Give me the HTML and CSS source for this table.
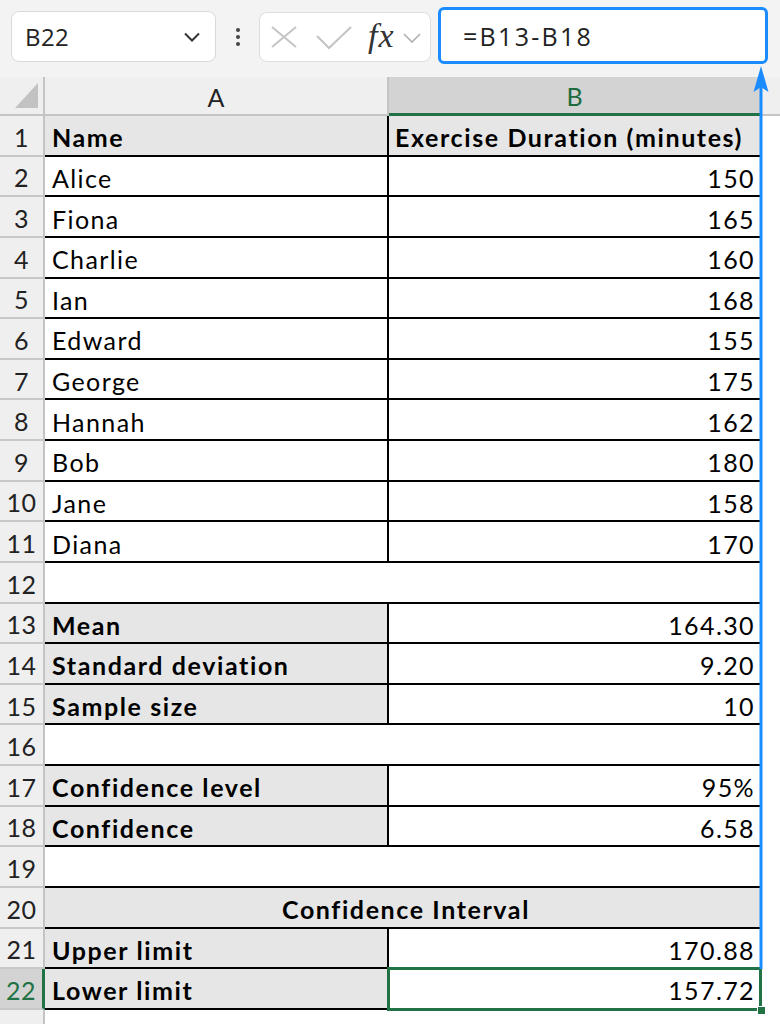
FILE: index.html
```html
<!DOCTYPE html>
<html>
<head>
<meta charset="utf-8">
<link rel="stylesheet" href="styles.css">
</head>
<body>
<div class="app">
  <div class="toolbar">
    <div class="namebox">
      <span class="namebox-text">B22</span>
      <svg class="chev" width="16" height="10" viewBox="0 0 16 10"><polyline points="1,1.5 8,8.5 15,1.5" fill="none" stroke="#333" stroke-width="2"/></svg>
    </div>
    <div class="kebab"><span></span><span></span><span></span></div>
    <div class="fxgroup">
      <svg class="ico-x" width="26" height="22" viewBox="0 0 26 22"><path d="M1 1 L25 21 M25 1 L1 21" stroke="#c4c4c4" stroke-width="2" fill="none"/></svg>
      <svg class="ico-check" width="36" height="24" viewBox="0 0 36 24"><polyline points="1,10 13,22 35,1" fill="none" stroke="#c4c4c4" stroke-width="2"/></svg>
      <span class="fx">fx</span>
      <svg class="ico-chev" width="18" height="10" viewBox="0 0 18 10"><polyline points="1,1 9,9 17,1" fill="none" stroke="#b0b0b0" stroke-width="1.6"/></svg>
    </div>
    <div class="formula"><span class="formula-text">=B13-B18</span></div>
  </div>

  <div class="sheet">
    <div class="corner"><span class="corner-tri"></span></div>
    <div class="colhead">A</div>
    <div class="colhead sel">B</div>
    <div class="colhead blank"></div>

    <div class="rh">1</div><div class="c a g bold">Name</div><div class="c b g bold left">Exercise Duration (minutes)</div><div class="c x"></div>
    <div class="rh">2</div><div class="c a">Alice</div><div class="c b">150</div><div class="c x"></div>
    <div class="rh">3</div><div class="c a">Fiona</div><div class="c b">165</div><div class="c x"></div>
    <div class="rh">4</div><div class="c a">Charlie</div><div class="c b">160</div><div class="c x"></div>
    <div class="rh">5</div><div class="c a">Ian</div><div class="c b">168</div><div class="c x"></div>
    <div class="rh">6</div><div class="c a">Edward</div><div class="c b">155</div><div class="c x"></div>
    <div class="rh">7</div><div class="c a">George</div><div class="c b">175</div><div class="c x"></div>
    <div class="rh">8</div><div class="c a">Hannah</div><div class="c b">162</div><div class="c x"></div>
    <div class="rh">9</div><div class="c a">Bob</div><div class="c b">180</div><div class="c x"></div>
    <div class="rh">10</div><div class="c a">Jane</div><div class="c b">158</div><div class="c x"></div>
    <div class="rh">11</div><div class="c a">Diana</div><div class="c b">170</div><div class="c x"></div>
    <div class="rh">12</div><div class="c m"></div><div class="c x"></div>
    <div class="rh">13</div><div class="c a g bold">Mean</div><div class="c b">164.30</div><div class="c x"></div>
    <div class="rh">14</div><div class="c a g bold">Standard deviation</div><div class="c b">9.20</div><div class="c x"></div>
    <div class="rh">15</div><div class="c a g bold">Sample size</div><div class="c b">10</div><div class="c x"></div>
    <div class="rh">16</div><div class="c m"></div><div class="c x"></div>
    <div class="rh">17</div><div class="c a g bold">Confidence level</div><div class="c b">95%</div><div class="c x"></div>
    <div class="rh">18</div><div class="c a g bold">Confidence</div><div class="c b">6.58</div><div class="c x"></div>
    <div class="rh">19</div><div class="c m"></div><div class="c x"></div>
    <div class="rh">20</div><div class="c m g bold center">Confidence Interval</div><div class="c x"></div>
    <div class="rh">21</div><div class="c a g bold">Upper limit</div><div class="c b">170.88</div><div class="c x"></div>
    <div class="rh sel">22</div><div class="c a g bold">Lower limit</div><div class="c b active">157.72<span class="handle"></span></div><div class="c x"></div>
    <div class="rh"></div><div class="c a0"></div><div class="c b0"></div><div class="c x"></div>
  </div>

  <svg class="annot" width="20" height="910" viewBox="0 0 20 910">
    <line x1="10" y1="20" x2="10" y2="903" stroke="#1a8cff" stroke-width="3"/>
    <polygon points="10,0 17.5,26 10,21 2.5,26" fill="#1a8cff"/>
  </svg>
</div>
</body>
</html>
```

FILE: styles.css
```css
* { box-sizing: border-box; }
html, body { margin: 0; padding: 0; }
body {
  width: 780px;
  height: 1024px;
  overflow: hidden;
  background: #ffffff;
  font-family: Lato, "Liberation Sans", sans-serif;
  color: #000;
}
.app { position: relative; width: 780px; height: 1024px; }

/* ---------- toolbar ---------- */
.toolbar {
  height: 77px;
  background: #f3f3f3;
  display: flex;
  align-items: flex-start;
  padding-left: 11px;
}
.namebox {
  margin-top: 11px;
  width: 205px;
  height: 51px;
  background: #fff;
  border: 1px solid #dadada;
  border-radius: 8px;
  display: flex;
  align-items: center;
  justify-content: space-between;
  padding: 0 15px 0 13px;
}
.namebox-text {
  font-family: "Open Sans", "Noto Sans", sans-serif;
  font-size: 24px;
  color: #222;
  letter-spacing: 0.4px;
}
.kebab {
  width: 43px;
  height: 77px;
  display: flex;
  flex-direction: column;
  align-items: center;
  justify-content: center;
  gap: 3px;
  padding-bottom: 3px;
}
.kebab span { width: 4px; height: 4px; border-radius: 50%; background: #444; }
.fxgroup {
  margin-top: 12px;
  width: 172px;
  height: 50px;
  background: #fff;
  border: 1px solid #dedede;
  border-radius: 8px;
  display: flex;
  align-items: center;
  padding-left: 11px;
}
.ico-x { margin-right: 19px; }
.ico-check { margin-right: 16px; margin-top: 2px; }
.fx {
  font-family: "Liberation Serif", "DejaVu Serif", serif;
  font-style: italic;
  font-size: 34px;
  color: #333;
  margin-right: 8px;
  letter-spacing: 1px;
  margin-top: -2px;
}
.ico-chev { margin-top: 2px; }
.formula {
  margin-left: 7px;
  margin-top: 7px;
  width: 330px;
  height: 57px;
  background: #fff;
  border: 3px solid #1a8cff;
  border-radius: 6px;
  display: flex;
  align-items: center;
  padding-left: 22px;
}
.formula-text {
  font-family: "Open Sans", "Noto Sans", sans-serif;
  font-size: 25px;
  color: #222;
  letter-spacing: 2.3px;
}

/* ---------- sheet ---------- */
.sheet {
  display: grid;
  grid-template-columns: 45px 344px 373px 1fr;
  grid-template-rows: 39px repeat(23, 40.63px);
}
.corner {
  background: #efefef;
  border-right: 2px solid #c4c4c4;
  border-bottom: 2px solid #c4c4c4;
  position: relative;
}
.corner-tri {
  position: absolute;
  left: 15px;
  top: 6px;
  width: 23px;
  height: 25px;
  background: #c2c2c2;
  clip-path: polygon(100% 0, 100% 100%, 0 100%);
}
.colhead {
  background: #efefef;
  border-right: 2px solid #c4c4c4;
  border-bottom: 2px solid #c4c4c4;
  display: flex;
  align-items: center;
  justify-content: center;
  font-family: Lato, "Liberation Sans", sans-serif;
  font-size: 25px;
  color: #222;
  padding-top: 2px;
}
.colhead.sel {
  background: #d3d3d3;
  color: #1e6b3e;
  border-bottom: 3px solid #217346;
}
.colhead.blank { border-right: none; }

.rh {
  background: #efefef;
  border-right: 2px solid #c4c4c4;
  border-bottom: 2px solid #c8c8c8;
  display: flex;
  align-items: center;
  justify-content: center;
  font-size: 25px;
  letter-spacing: 0.5px;
  color: #222;
  padding-top: 3px;
}
.rh.sel {
  background: #d3d3d3;
  color: #217346;
  border-right: 3px solid #217346;
}

.c {
  display: flex;
  align-items: center;
  font-size: 25px;
  letter-spacing: 1.4px;
  white-space: nowrap;
  padding-top: 4px;
}
.c.a {
  border-right: 2px solid #000;
  border-bottom: 2px solid #000;
  padding-left: 7px;
}
.c.b {
  border-right: 2px solid #000;
  border-bottom: 2px solid #000;
  justify-content: flex-end;
  padding-right: 5px;
}
.c.b.left { justify-content: flex-start; padding-left: 6px; }
.c.m {
  grid-column: span 2;
  border-right: 2px solid #000;
  border-bottom: 2px solid #000;
  padding-left: 7px;
}
.c.center { justify-content: center; }
.c.g { background: #e6e6e6; }
.c.bold { font-weight: 700; letter-spacing: 1.6px; }
.c.x { background: #fff; }
.c.a0, .c.b0 { background: #fff; }

.c.active { position: relative; }
.c.active::after {
  content: "";
  position: absolute;
  left: -2px;
  top: -2px;
  right: -2px;
  bottom: -3px;
  border: 3px solid #217346;
}
.handle {
  position: absolute;
  right: -6px;
  bottom: -7px;
  width: 9px;
  height: 9px;
  background: #217346;
  border: 1px solid #fff;
  z-index: 2;
}

/* annotation arrow */
.annot {
  position: absolute;
  left: 751px;
  top: 66px;
}
```
